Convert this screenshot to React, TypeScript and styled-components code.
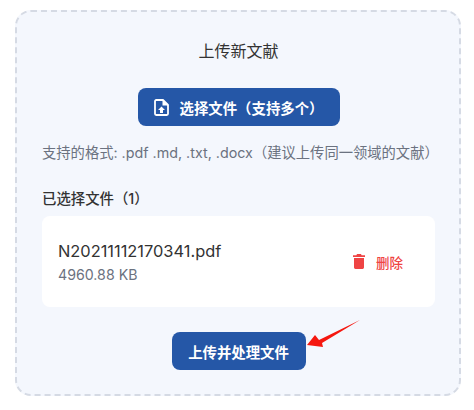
import React from 'react';
import styled, { createGlobalStyle } from 'styled-components';

const GlobalStyle = createGlobalStyle`
	html, body {
		margin: 0;
		padding: 0;
		background: #fff;
	}
	body {
		font-family: Inter, "Noto Sans CJK SC", sans-serif;
	}
`;

const Page = styled.div`
	width: 474px;
	height: 410px;
	padding: 10px 0 0 15px;
	box-sizing: border-box;
	overflow: hidden;
`;
const Panel = styled.section`
	position: relative;
	width: 446px;
	height: 386px;
	box-sizing: border-box;
	padding: 27px 24px 0 25px;
	display: flex;
	flex-direction: column;
	background: #f4f7fd;
	border: 2px dashed #d5dae4;
	border-radius: 16px;
`;
const Title = styled.h2`
	margin: 0;
	font-size: 16px;
	line-height: 24px;
	font-weight: 400;
	color: #333;
	text-align: center;
`;
const PrimaryButton = styled.button<{ $width: number }>`
	align-self: center;
	flex-shrink: 0;
	width: ${p => p.$width}px;
	height: 38px;
	padding: 0;
	display: flex;
	align-items: center;
	justify-content: center;
	gap: 11px;
	border: 0;
	border-radius: 8px;
	background: #2557a7;
	color: #fff;
	font-family: inherit;
	font-size: 14.4px;
	font-weight: 700;
`;
const PickButton = styled(PrimaryButton)`
	margin-top: 25px;
`;
const Formats = styled.p`
	margin: 15px 0 0;
	font-size: 14.3px;
	line-height: 24px;
	color: #6b7280;
	white-space: nowrap;
`;
const ListTitle = styled.h3`
	margin: 23px 0 0;
	font-size: 14.4px;
	line-height: 22px;
	font-weight: 500;
	color: #333;
`;
const FileRow = styled.div`
	margin-top: 6px;
	height: 91px;
	flex-shrink: 0;
	padding: 0 16px;
	display: flex;
	align-items: center;
	justify-content: space-between;
	background: #fff;
	border-radius: 8px;
`;
const FileName = styled.div`
	font-size: 16.4px;
	line-height: 24px;
	color: #333;
`;
const FileSize = styled.div`
	margin-top: 2px;
	font-size: 14.2px;
	line-height: 20px;
	color: #6b7280;
`;
const DeleteButton = styled.button`
	margin-right: 16px;
	padding: 0;
	display: flex;
	align-items: center;
	gap: 11px;
	border: 0;
	background: none;
	color: #ef4444;
	font-family: inherit;
	font-size: 13.5px;
	font-weight: 500;
`;
const UploadButton = styled(PrimaryButton)`
	margin-top: 25px;
`;
const Arrow = styled.svg`
	position: absolute;
	left: 290px;
	top: 308px;
`;

const App = () => {
	return (
		<Page>
			<GlobalStyle />
			<Panel>
				<Title>上传新文献</Title>
				<PickButton $width={202}>
					<svg width="15" height="17" viewBox="0 0 15 17">
						<path
							d="M2.200 1h6.800l5 5v8.800a1.200 1.200 0 0 1-1.200 1.200H2.200A1.200 1.200 0 0 1 1 14.800V2.200A1.200 1.200 0 0 1 2.200 1z"
							fill="none"
							stroke="#fff"
							strokeWidth="1.800"
							strokeLinejoin="round"
						/>
						<path d="M8.500 1v5.500H14z" fill="#fff" />
						<path d="M7.500 7.500l3.500 3.500H9v3H6v-3H4z" fill="#fff" />
					</svg>
					选择文件（支持多个）
				</PickButton>
				<Formats>支持的格式: .pdf .md, .txt, .docx（建议上传同一领域的文献）</Formats>
				<ListTitle>已选择文件（1）</ListTitle>
				<FileRow>
					<div>
						<FileName>N20211112170341.pdf</FileName>
						<FileSize>4960.88 KB</FileSize>
					</div>
					<DeleteButton>
						<svg width="12" height="15" viewBox="0 0 12 15">
							<path d="M4 0h4l.6 1.300H12V3H0V1.300h3.400z" fill="#ef4444" />
							<path d="M1 4h10v9.600A1.400 1.400 0 0 1 9.600 15H2.400A1.400 1.400 0 0 1 1 13.600z" fill="#ef4444" />
						</svg>
						删除
					</DeleteButton>
				</FileRow>
				<UploadButton $width={134}>上传并处理文件</UploadButton>
				<Arrow width="54" height="28" viewBox="0 0 54 28">
					<path d="M53 0L15 23l1 4L0 25 8 15l4 5z" fill="#f5170f" />
				</Arrow>
			</Panel>
		</Page>
	);
};

export default App;
